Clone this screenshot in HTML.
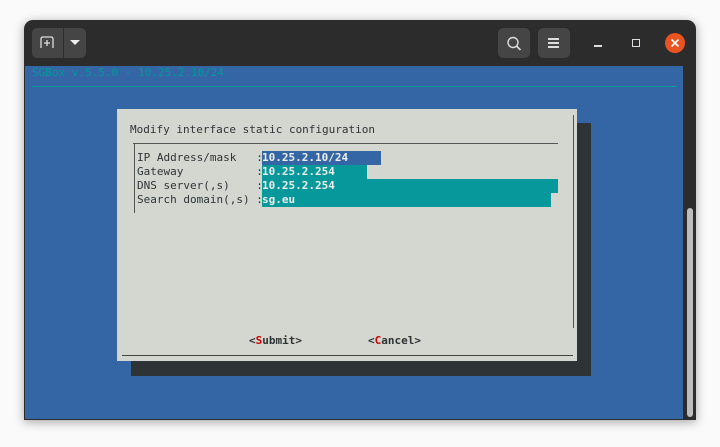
<!DOCTYPE html>
<html><head><style>
body{margin:0;width:720px;height:447px;background:#fafafa;position:relative;overflow:hidden;font-family:"DejaVu Sans Mono","Liberation Mono",monospace;}
.a{position:absolute}
.win{left:24px;top:20px;width:672px;height:400px;background:#2c2c2c;border-radius:9px 9px 0 0;box-shadow:0 2px 10px rgba(0,0,0,.35)}
.t{font-size:11px;line-height:14px;white-space:pre;color:#2e3436}
.btn{background:#454545;border-radius:5px}
</style></head><body>
<div class="a win"></div>
<div class="a btn" style="left:32px;top:28px;width:54px;height:30px"></div>
<div class="a" style="left:63px;top:28px;width:1px;height:30px;background:#2c2c2c"></div>
<svg class="a" style="left:38px;top:34px" width="20" height="18"><path d="M3 14V5q0-2 2-2h8q2 0 2 2v9" fill="none" stroke="#ddd" stroke-width="1.3"/><path d="M9 6v6M6 9h6" stroke="#ddd" stroke-width="1.3"/></svg>
<svg class="a" style="left:69px;top:39px" width="12" height="8"><path d="M1 1h10L6 6z" fill="#eee"/></svg>
<div class="a btn" style="left:498px;top:28px;width:32px;height:30px"></div>
<svg class="a" style="left:505px;top:35px" width="18" height="18"><circle cx="8" cy="7.5" r="5" fill="none" stroke="#ddd" stroke-width="1.4"/><path d="M11.5 11l4 4" stroke="#ddd" stroke-width="1.6"/></svg>
<div class="a btn" style="left:538px;top:28px;width:32px;height:30px"></div>
<div class="a" style="left:548px;top:38px;width:11px;height:1.5px;background:#ddd;box-shadow:0 4px 0 #ddd,0 8px 0 #ddd"></div>
<div class="a" style="left:594px;top:45px;width:8px;height:1.5px;background:#ddd"></div>
<div class="a" style="left:632px;top:39px;width:6px;height:6px;border:1.5px solid #ddd"></div>
<div class="a" style="left:665px;top:33px;width:20px;height:20px;border-radius:50%;background:#e95420"></div>
<svg class="a" style="left:665px;top:33px" width="20" height="20"><path d="M6.5 6.5l7 7M13.5 6.5l-7 7" stroke="#fff" stroke-width="1.6"/></svg>
<div class="a" style="left:25px;top:66px;width:658px;height:353px;background:#3465a4"></div>
<div class="a" style="left:683px;top:66px;width:13px;height:354px;background:#2c2c2c"></div>
<div class="a" style="left:687px;top:208px;width:6px;height:209px;background:#bdbdbd;border-radius:3px"></div>
<div class="a t" style="left:32px;top:66px;color:#06989a">SGBox v.5.5.0 - 10.25.2.10/24</div>
<div class="a" style="left:32px;top:86px;width:645px;height:1px;background:#06989a"></div>
<div class="a" style="left:131px;top:123px;width:460px;height:253px;background:#2e3436"></div>
<div class="a" style="left:117px;top:109px;width:460px;height:252px;background:#d3d7cf"></div>
<div class="a" style="left:573px;top:115px;width:1px;height:213px;background:#555"></div>
<div class="a" style="left:122px;top:355px;width:451px;height:1px;background:#444"></div>
<div class="a" style="left:133px;top:143px;width:425px;height:1px;background:#555"></div>
<div class="a" style="left:134px;top:143px;width:1px;height:70px;background:#555"></div>
<div class="a" style="left:262px;top:151px;width:119px;height:14px;background:#3465a4"></div>
<div class="a" style="left:262px;top:165px;width:105px;height:14px;background:#06989a"></div>
<div class="a" style="left:262px;top:179px;width:296px;height:14px;background:#06989a"></div>
<div class="a" style="left:262px;top:193px;width:289px;height:14px;background:#06989a"></div>
<div class="a t" style="left:130px;top:123px">Modify interface static configuration</div>
<div class="a t" style="left:137px;top:151px">IP Address/mask   :
Gateway           :
DNS server(,s)    :
Search domain(,s) :</div>
<div class="a t" style="left:262px;top:151px;color:#eeeeec;font-weight:bold">10.25.2.10/24
10.25.2.254
10.25.2.254
sg.eu</div>
<div class="a t" style="left:249px;top:334px;font-weight:bold">&lt;<span style="color:#cc0000">S</span>ubmit&gt;</div>
<div class="a t" style="left:368px;top:334px;font-weight:bold">&lt;<span style="color:#cc0000">C</span>ancel&gt;</div>
</body></html>
